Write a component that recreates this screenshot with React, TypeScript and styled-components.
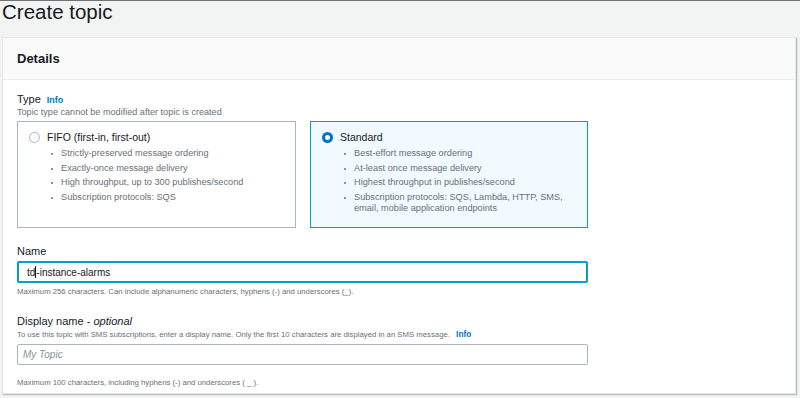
import styled, { createGlobalStyle } from "styled-components";

const GlobalStyle = createGlobalStyle`
  html, body {
    margin: 0;
    padding: 0;
    background: #f2f3f3;
  }
  body {
    font-family: "Liberation Sans", Arial, sans-serif;
    color: #16191f;
  }
  * {
    box-sizing: border-box;
  }
`;

const fifoItems = [
  "Strictly-preserved message ordering",
  "Exactly-once message delivery",
  "High throughput, up to 300 publishes/second",
  "Subscription protocols: SQS",
];

const standardItems = [
  "Best-effort message ordering",
  "At-least once message delivery",
  "Highest throughput in publishes/second",
  "Subscription protocols: SQS, Lambda, HTTP, SMS, email, mobile application endpoints",
];

function TypeCard({
  title,
  items,
  selected,
}: {
  title: string;
  items: string[];
  selected?: boolean;
}) {
  return (
    <Card $selected={selected}>
      <CardHead>
        <Radio $selected={selected} />
        <span>{title}</span>
      </CardHead>
      <BulletList>
        {items.map((item) => (
          <li key={item}>{item}</li>
        ))}
      </BulletList>
    </Card>
  );
}

export default function App() {
  return (
    <Page>
      <GlobalStyle />
      <Title>Create topic</Title>
      <Panel>
        <PanelHeader>Details</PanelHeader>
        <PanelBody>
          <Field>
            <LabelRow>
              <Label>Type</Label>
              <InfoLink>Info</InfoLink>
            </LabelRow>
            <Description $size={9.1}>Topic type cannot be modified after topic is created</Description>
            <CardGrid>
              <TypeCard title="FIFO (first-in, first-out)" items={fifoItems} />
              <TypeCard title="Standard" items={standardItems} selected />
            </CardGrid>
          </Field>

          <Field>
            <Label>Name</Label>
            <Input $focused>
              td<Caret />-instance-alarms
            </Input>
            <Hint>
              Maximum 256 characters. Can include alphanumeric characters, hyphens (-) and
              underscores (_).
            </Hint>
          </Field>

          <Field>
            <Label>
              Display name - <em>optional</em>
            </Label>
            <Description $size={7.75}>
              To use this topic with SMS subscriptions, enter a display name. Only the first 10
              characters are displayed in an SMS message. <InfoLink $small>Info</InfoLink>
            </Description>
            <Input>
              <Placeholder>My Topic</Placeholder>
            </Input>
            <Hint $gap={12}>Maximum 100 characters, including hyphens (-) and underscores ( _ ).</Hint>
          </Field>
        </PanelBody>
      </Panel>
    </Page>
  );
}

const Page = styled.div`
  height: 398px;
  overflow: hidden;
  border-top: 1px solid #6e7378;
  padding: 0 4px 0 2px;
`;

const Title = styled.h1`
  margin: 0;
  height: 36px;
  padding-top: 1px;
  font-size: 20.5px;
  font-weight: 400;
  line-height: 20px;
  color: #16191f;
`;

const Panel = styled.div`
  background: #ffffff;
  border: 1px solid #e4e7e8;
  box-shadow: 1px 1px 1px rgba(0, 28, 36, 0.25);
`;

const PanelHeader = styled.div`
  background: #fafafa;
  height: 42px;
  display: flex;
  align-items: center;
  padding: 0 14px;
  border-bottom: 1px solid #eaeded;
  font-size: 13px;
  font-weight: 700;
  color: #16191f;
`;

const PanelBody = styled.div`
  padding: 12px 14px 4px;
  width: 600px;
  display: flex;
  flex-direction: column;
  gap: 16px;
`;

const Field = styled.div`
  display: flex;
  flex-direction: column;
  width: 571px;
`;

const LabelRow = styled.div`
  display: flex;
  align-items: baseline;
  gap: 6px;
`;

const Label = styled.div`
  font-size: 11px;
  line-height: 14px;
  color: #16191f;
  em {
    font-style: italic;
  }
`;

const InfoLink = styled.span<{ $small?: boolean }>`
  font-size: ${(p) => (p.$small ? "8.3px" : "9px")};
  font-weight: 700;
  color: #0073bb;
  margin-left: ${(p) => (p.$small ? "4px" : "0")};
`;

const Description = styled.div<{ $size: number }>`
  font-size: ${(p) => p.$size}px;
  line-height: 12px;
  color: #687078;
`;

const CardGrid = styled.div`
  display: grid;
  grid-template-columns: 279px 278px;
  gap: 14px;
  margin-top: 3px;
`;

const Card = styled.div<{ $selected?: boolean }>`
  height: 107px;
  border: 1px solid ${(p) => (p.$selected ? "#00a1c9" : "#aab7b8")};
  background: ${(p) => (p.$selected ? "#f1faff" : "#ffffff")};
  padding: 8px 22px 0 11px;
`;

const CardHead = styled.div`
  display: flex;
  align-items: center;
  gap: 7px;
  font-size: 10.5px;
  color: #16191f;
  height: 14px;
`;

const Radio = styled.span<{ $selected?: boolean }>`
  width: 11px;
  height: 11px;
  border-radius: 50%;
  flex: none;
  border: ${(p) => (p.$selected ? "3px solid #0073bb" : "1px solid #aab7b8")};
  background: #ffffff;
`;

const BulletList = styled.ul`
  margin: 4px 0 0;
  padding: 0 0 0 32px;
  font-size: 9.2px;
  line-height: 11px;
  color: #687078;
  list-style: none;
  li {
    position: relative;
    margin-bottom: 3.6px;
  }
  li::before {
    content: "";
    position: absolute;
    left: -10px;
    top: 5px;
    width: 2px;
    height: 2px;
    border-radius: 50%;
    background: #687078;
  }
`;

const Input = styled.div<{ $focused?: boolean }>`
  margin-top: 3px;
  height: ${(p) => (p.$focused ? "22px" : "21px")};
  display: flex;
  align-items: center;
  padding: 0 8px;
  border: ${(p) => (p.$focused ? "2px solid #00a1c9" : "1px solid #aab7b8")};
  border-radius: 2px;
  font-size: 10px;
  color: #16191f;
  background: #ffffff;
`;

const Caret = styled.span`
  display: inline-block;
  width: 1px;
  height: 12px;
  background: #16191f;
`;

const Placeholder = styled.span`
  font-style: italic;
  color: #879596;
  margin-left: -3px;
`;

const Hint = styled.div<{ $gap?: number }>`
  margin-top: ${(p) => p.$gap ?? 3}px;
  font-size: 7.75px;
  line-height: 12px;
  color: #687078;
`;
